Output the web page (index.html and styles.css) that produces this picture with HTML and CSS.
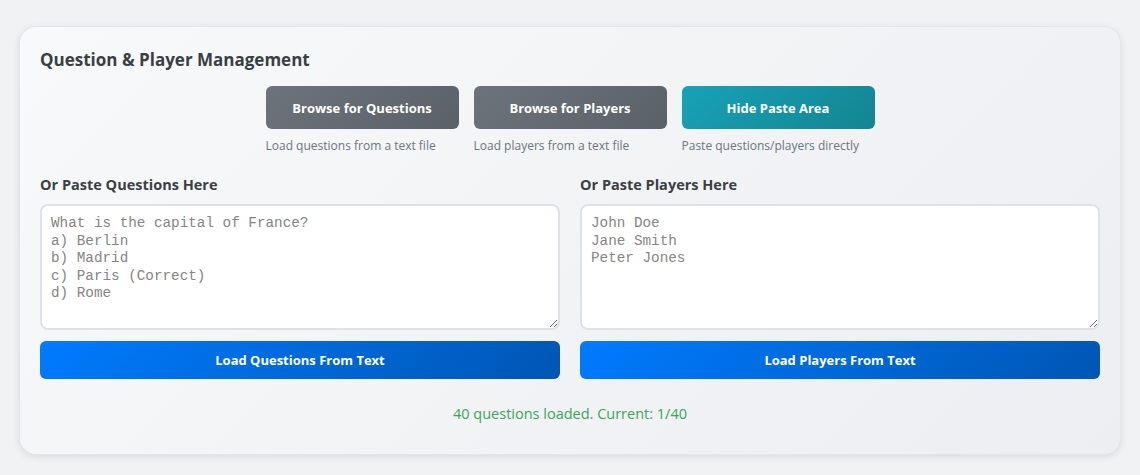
FILE: index.html
```html
<!DOCTYPE html>
<html lang="en">
<head>
    <meta charset="UTF-8">
    <title>Question &amp; Player Management</title>
    <link rel="stylesheet" href="styles.css">
</head>
<body>
<div class="card">
    <h2 class="card-title">Question &amp; Player Management</h2>

    <div class="file-actions">
        <div class="action">
            <button class="btn btn-gray">Browse for Questions</button>
            <span class="hint">Load questions from a text file</span>
        </div>
        <div class="action">
            <button class="btn btn-gray">Browse for Players</button>
            <span class="hint">Load players from a text file</span>
        </div>
        <div class="action">
            <button class="btn btn-teal">Hide Paste Area</button>
            <span class="hint">Paste questions/players directly</span>
        </div>
    </div>

    <div class="paste-area">
        <div class="paste-col">
            <label class="paste-label">Or Paste Questions Here</label>
            <textarea class="paste-box" placeholder="What is the capital of France?
a) Berlin
b) Madrid
c) Paris (Correct)
d) Rome"></textarea>
            <button class="btn btn-blue">Load Questions From Text</button>
        </div>
        <div class="paste-col">
            <label class="paste-label">Or Paste Players Here</label>
            <textarea class="paste-box" placeholder="John Doe
Jane Smith
Peter Jones"></textarea>
            <button class="btn btn-blue">Load Players From Text</button>
        </div>
    </div>

    <p class="status">40 questions loaded. Current: 1/40</p>
</div>
</body>
</html>
```

FILE: styles.css
```css
body {
    margin: 0;
    padding: 27px 20px;
    background: #f1f2f4;
    font-family: "Segoe UI", "Open Sans", "Noto Sans", sans-serif;
}

.card {
    background: linear-gradient(135deg, #f8f9fa, #eceef1);
    border-radius: 16px;
    padding: 20px 20px 21px;
    box-shadow: 0 0 0 1px #e3e5e8, 0 2px 8px rgba(0, 0, 0, 0.12);
}

.card-title {
    margin: 0 0 13px;
    font-size: 17px;
    line-height: 26px;
    font-weight: 700;
    color: #3a3f44;
}

.file-actions {
    display: flex;
    justify-content: center;
    gap: 15px;
}

.action {
    display: flex;
    flex-direction: column;
    width: 193px;
}

.btn {
    border: none;
    color: #fff;
    font-family: inherit;
    font-weight: 700;
    font-size: 13px;
    cursor: pointer;
}

.btn-gray,
.btn-teal {
    height: 43px;
    border-radius: 6px;
}

.btn-gray {
    background: linear-gradient(135deg, #6c737a, #5a6168);
}

.btn-teal {
    background: linear-gradient(135deg, #17a2b8, #138591);
}

.hint {
    margin-top: 8px;
    font-size: 12px;
    color: #6c757d;
}

.paste-area {
    display: flex;
    gap: 20px;
    margin-top: 21px;
}

.paste-col {
    flex: 1;
    display: flex;
    flex-direction: column;
}

.paste-label {
    font-size: 14.5px;
    line-height: 20px;
    font-weight: 700;
    color: #3a3f44;
    margin-bottom: 9px;
}

.paste-box {
    height: 126px;
    box-sizing: border-box;
    border: 2px solid #dee2e6;
    border-radius: 8px;
    padding: 9px 9px;
    font-family: "Liberation Mono", "Courier New", monospace;
    font-size: 14.3px;
    line-height: 17.5px;
    background: #fff;
}

.paste-box::placeholder {
    color: #858585;
}

.btn-blue {
    margin-top: 11px;
    height: 38px;
    border-radius: 6px;
    background: linear-gradient(135deg, #007bff, #0056b3);
}

.status {
    margin: 25px 0 10px;
    text-align: center;
    font-size: 14.5px;
    color: #3ba55c;
}
```
